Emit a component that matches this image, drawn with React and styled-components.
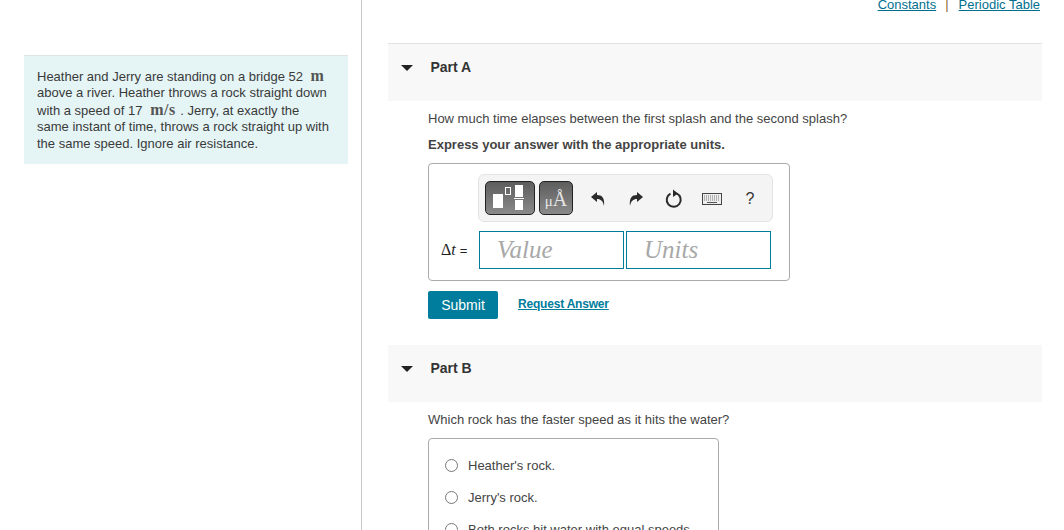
import React from 'react';
import styled, { createGlobalStyle } from 'styled-components';

const Global = createGlobalStyle`
  html, body { margin: 0; padding: 0; background: #fff; overflow: hidden; }
  body, * { box-sizing: border-box; font-family: 'Liberation Sans', Arial, sans-serif; }
`;

const Page = styled.div`
  width: 1064px;
  height: 530px;
  overflow: hidden;
  display: flex;
  color: #333;
  font-size: 13px;
`;
const LeftCol = styled.aside`
  width: 362px;
  flex: none;
  border-right: 1px solid #c8c8c8;
  padding: 55px 13px 0 24px;
`;
const Intro = styled.div`
  background: #e5f5f6;
  border-top: 1px solid #dfe5e6;
  height: 109px;
  padding: 12px 13px;
  font-size: 13px;
  line-height: 16.4px;
  color: #3a3a3a;
`;
const Unit = styled.span`
  font-family: 'Liberation Serif', serif;
  font-size: 16px;
  line-height: 1;
  font-weight: 700;
  color: #555;
  margin: 0 1px 0 4px;
  letter-spacing: 0.5px;
`;
const RightCol = styled.main`
  flex: 1;
  padding-left: 26px;
  padding-right: 22px;
`;
const TopLinks = styled.div`
  height: 50px;
  margin-top: -7px;
  padding: 3px 2px 0 0;
  display: flex;
  justify-content: flex-end;
  gap: 9px;
  font-size: 13px;
  line-height: 18px;
`;
const TopLink = styled.a`
  color: #006f8f;
  text-decoration: underline;
`;
const Sep = styled.span`
  color: #8a6a3a;
  margin-right: 1px;
`;
const PartHeader = styled.div`
  height: ${p => (p.$ruled ? 58 : 57)}px;
  background: #f8f8f8;
  border-top: ${p => (p.$ruled ? '1px solid #e2e2e2' : 'none')};
  display: flex;
  align-items: flex-start;
  padding: 14px 0 0 13px;
`;
const Caret = styled.span`
  width: 0;
  height: 0;
  margin-top: 7px;
  border-left: 6px solid transparent;
  border-right: 6px solid transparent;
  border-top: 6px solid #222;
`;
const PartTitle = styled.h2`
  margin: 0 0 0 17.5px;
  font-size: 14px;
  line-height: 18px;
  font-weight: 700;
  color: #333;
`;
const PartBody = styled.section`
  padding: 9px 0 0 40px;
`;
const Question = styled.p`
  margin: 0;
  font-size: 13px;
  line-height: 18px;
  color: #444;
`;
const Instruction = styled.p`
  margin: 8px 0 0;
  font-size: 13px;
  line-height: 18px;
  font-weight: 700;
  color: #444;
`;
const AnswerBox = styled.div`
  margin-top: 9px;
  width: 362px;
  height: 118px;
  border: 1px solid #aaa;
  border-radius: 4px;
  padding: 10px 0 0 11px;
`;
const Toolbar = styled.div`
  margin-left: 38px;
  width: 295px;
  height: 48px;
  background: #f4f4f4;
  border: 1px solid #e4e4e4;
  border-radius: 6px;
  display: flex;
  align-items: center;
  padding-left: 6px;
`;
const ToolButton = styled.button`
  width: ${p => p.$w}px;
  height: 34px;
  flex: none;
  margin-right: ${p => p.$gap || 0}px;
  padding: 0;
  border: 1px solid #222;
  border-radius: 5px;
  background: linear-gradient(#5d5d5d, #8a8a8a);
  display: flex;
  align-items: center;
  justify-content: center;
`;
const MicroLabel = styled.span`
  font-family: 'Liberation Serif', serif;
  font-size: 20px;
  line-height: 20px;
  color: #e6e6e6;
  margin-top: 3px;
  small {
    font-family: 'Liberation Serif', serif;
    font-size: 15px;
  }
`;
const ToolIcon = styled.span`
  width: 38px;
  flex: none;
  display: flex;
  justify-content: center;
  align-items: center;
  color: #333;
  font-size: 16px;
`;
const ToolIcons = styled.div`
  display: flex;
  margin-left: 6px;
  padding-top: 1px;
`;
const InputRow = styled.div`
  display: flex;
  align-items: center;
  margin-top: 9px;
`;
const VarLabel = styled.span`
  width: 39px;
  padding-left: 1px;
  font-family: 'Liberation Serif', serif;
  font-size: 16px;
  white-space: nowrap;
  color: #222;
  i { font-family: 'Liberation Serif', serif; }
  small {
    font-family: 'Liberation Sans', sans-serif;
    font-size: 13px;
  }
`;
const Field = styled.div`
  width: 145px;
  height: 38px;
  margin-right: 2px;
  border: 1px solid #007c9c;
  padding-left: 17px;
  font-family: 'Liberation Serif', serif;
  font-style: italic;
  font-size: 25px;
  line-height: 35px;
  color: #a8a8a8;
`;
const Actions = styled.div`
  display: flex;
  margin-top: 10px;
  align-items: flex-start;
`;
const Submit = styled.button`
  width: 70px;
  height: 28px;
  border: none;
  border-radius: 2px;
  background: #007c9c;
  color: #fff;
  font-size: 14px;
`;
const Request = styled.a`
  margin: 5px 0 0 20px;
  color: #007c9c;
  font-size: 12px;
  line-height: 16px;
  font-weight: 700;
  letter-spacing: -0.2px;
  text-decoration: underline;
`;
const PartGap = styled.div`
  height: 26px;
`;
const ChoiceBox = styled.div`
  margin-top: 9px;
  width: 291px;
  height: 120px;
  border: 1px solid #aaa;
  border-radius: 4px;
  padding: 10px 0 0 16px;
`;
const Choice = styled.label`
  display: flex;
  align-items: center;
  height: 32px;
  font-size: 13px;
  color: #444;
`;
const Radio = styled.span`
  width: 13px;
  height: 13px;
  border: 1px solid #777;
  border-radius: 50%;
  margin-right: 10px;
  flex: none;
`;

const FractionIcon = () => (
  <svg width="40" height="30" viewBox="0 0 40 30">
    <rect x="3" y="11" width="10" height="14" fill="#fff" />
    <rect x="15.5" y="4.5" width="5" height="7" fill="none" stroke="#fff" />
    <rect x="25" y="2" width="8" height="12" fill="#fff" />
    <rect x="24" y="15" width="10" height="1" fill="#fff" />
    <rect x="25" y="17" width="8" height="10" fill="#fff" />
  </svg>
);

const Undo = () => (
  <svg width="16" height="16" viewBox="0 0 16 16">
    <path d="M1 6 L7 1 V4 C12 4 15 7 14 15 C13 10 11 8 7 8 V11 Z" fill="#2b2b2b" />
  </svg>
);

const Redo = () => (
  <svg width="16" height="16" viewBox="0 0 16 16">
    <path d="M15 6 L9 1 V4 C4 4 1 7 2 15 C3 10 5 8 9 8 V11 Z" fill="#2b2b2b" />
  </svg>
);

const Reset = () => (
  <svg width="18" height="20" viewBox="0 0 18 20">
    <path d="M11.5 4.4 A7 7 0 1 1 5.5 4.6" fill="none" stroke="#2b2b2b" strokeWidth="2" />
    <path d="M8 0.5 L13 4.4 L8 8 Z" fill="#2b2b2b" />
  </svg>
);

const Keyboard = () => (
  <svg width="20" height="12" viewBox="0 0 20 12">
    <rect x="0.5" y="0.5" width="19" height="11" fill="#eee" stroke="#444" />
    <path d="M2 3 H18 M2 5 H18 M2 7 H18" stroke="#777" strokeDasharray="1 1" />
    <path d="M5 9.5 H15" stroke="#555" />
  </svg>
);

export default function App() {
  return (
    <Page>
      <Global />
      <LeftCol>
        <Intro>
          Heather and Jerry are standing on a bridge 52 <Unit>m</Unit><br />
          above a river. Heather throws a rock straight down<br />
          with a speed of 17 <Unit>m/s</Unit> . Jerry, at exactly the<br />
          same instant of time, throws a rock straight up with<br />
          the same speed. Ignore air resistance.
        </Intro>
      </LeftCol>
      <RightCol>
        <TopLinks>
          <TopLink>Constants</TopLink>
          <Sep>|</Sep>
          <TopLink>Periodic Table</TopLink>
        </TopLinks>
        <PartHeader $ruled>
          <Caret />
          <PartTitle>Part A</PartTitle>
        </PartHeader>
        <PartBody>
          <Question>How much time elapses between the first splash and the second splash?</Question>
          <Instruction>Express your answer with the appropriate units.</Instruction>
          <AnswerBox>
            <Toolbar>
              <ToolButton $w={50} $gap={4}><FractionIcon /></ToolButton>
              <ToolButton $w={34}><MicroLabel><small>μ</small>Å</MicroLabel></ToolButton>
              <ToolIcons>
                <ToolIcon><Undo /></ToolIcon>
                <ToolIcon><Redo /></ToolIcon>
                <ToolIcon><Reset /></ToolIcon>
                <ToolIcon><Keyboard /></ToolIcon>
                <ToolIcon>?</ToolIcon>
              </ToolIcons>
            </Toolbar>
            <InputRow>
              <VarLabel>Δ<i>t</i> <small>=</small></VarLabel>
              <Field>Value</Field>
              <Field>Units</Field>
            </InputRow>
          </AnswerBox>
          <Actions>
            <Submit>Submit</Submit>
            <Request>Request Answer</Request>
          </Actions>
        </PartBody>
        <PartGap />
        <PartHeader>
          <Caret />
          <PartTitle>Part B</PartTitle>
        </PartHeader>
        <PartBody>
          <Question>Which rock has the faster speed as it hits the water?</Question>
          <ChoiceBox>
            <Choice><Radio />Heather's rock.</Choice>
            <Choice><Radio />Jerry's rock.</Choice>
            <Choice><Radio />Both rocks hit water with equal speeds.</Choice>
          </ChoiceBox>
        </PartBody>
      </RightCol>
    </Page>
  );
}
